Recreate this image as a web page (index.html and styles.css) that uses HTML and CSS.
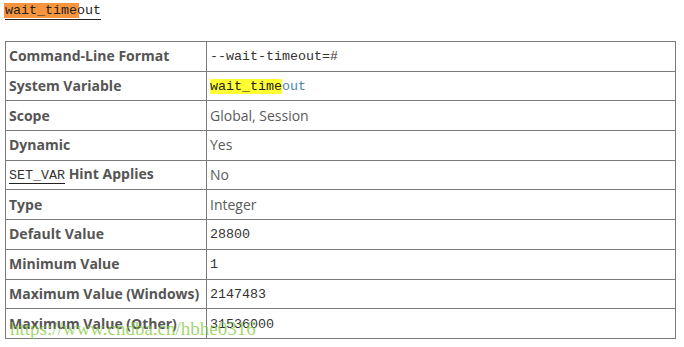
FILE: index.html
```html
<!DOCTYPE html>
<html>
<head>
<meta charset="utf-8">
<link rel="stylesheet" href="styles.css">
</head>
<body>
<div class="page">
  <div class="heading"><span class="term"><span class="hl-orange">wait_time</span>out</span></div>
  <div class="table-wrap">
    <table class="props">
      <tbody>
        <tr><th>Command-Line Format</th><td><code>--wait-timeout=#</code></td></tr>
        <tr><th>System Variable</th><td><code><span class="hl-yellow">wait_time</span><span class="link">out</span></code></td></tr>
        <tr><th>Scope</th><td>Global, Session</td></tr>
        <tr><th>Dynamic</th><td>Yes</td></tr>
        <tr><th><code class="ul">SET_VAR</code> Hint Applies</th><td>No</td></tr>
        <tr><th>Type</th><td>Integer</td></tr>
        <tr><th>Default Value</th><td><code>28800</code></td></tr>
        <tr><th>Minimum Value</th><td><code>1</code></td></tr>
        <tr><th>Maximum Value (Windows)</th><td><code>2147483</code></td></tr>
        <tr><th>Maximum Value (Other)</th><td><code>31536000</code></td></tr>
      </tbody>
    </table>
    <div class="watermark">https://www.cndba.cn/hbhe0316</div>
  </div>
</div>
</body>
</html>
```
FILE: styles.css
```css
html, body {
  margin: 0;
  padding: 0;
  background: #fff;
}
.page {
  padding: 3px 0 0 5px;
}
.heading {
  height: 38px;
  font-family: "Liberation Mono", monospace;
  font-size: 13.33px;
  line-height: 15px;
}
.term {
  color: #222;
  border-bottom: 1px solid #222;
  padding-bottom: 1px;
}
.hl-orange {
  background: #f7953e;
  padding-left: 1px;
  margin-left: -1px;
  padding-right: 2px;
  margin-right: -2px;
}
.table-wrap {
  position: relative;
  width: 671px;
}
.props {
  border-collapse: collapse;
  width: 671px;
  font-family: "Open Sans", sans-serif;
  font-size: 14px;
  color: #555;
}
.props th, .props td {
  border: 1px solid #7b7b7b;
  height: 29.7px;
  padding: 0 3px;
  text-align: left;
  vertical-align: middle;
  line-height: 20px;
  box-sizing: border-box;
}
.props th {
  width: 201px;
  font-weight: 700;
  color: #555;
  padding-left: 3px;
  white-space: nowrap;
}
.props td {
  font-weight: 400;
  color: #5a5a5a;
}
code {
  font-family: "Liberation Mono", monospace;
  font-size: 13.33px;
  color: #333;
}
code.ul {
  color: #333;
  font-weight: 400;
  border-bottom: 1px solid #222;
}
.hl-yellow {
  background: #ffff33;
  color: #222;
}
.link {
  color: #4a88ab;
}
.watermark {
  position: absolute;
  left: 5px;
  bottom: 0px;
  font-family: "Liberation Serif", serif;
  font-size: 19px;
  line-height: 20px;
  color: rgba(130, 200, 60, 0.75);
  pointer-events: none;
}
```
